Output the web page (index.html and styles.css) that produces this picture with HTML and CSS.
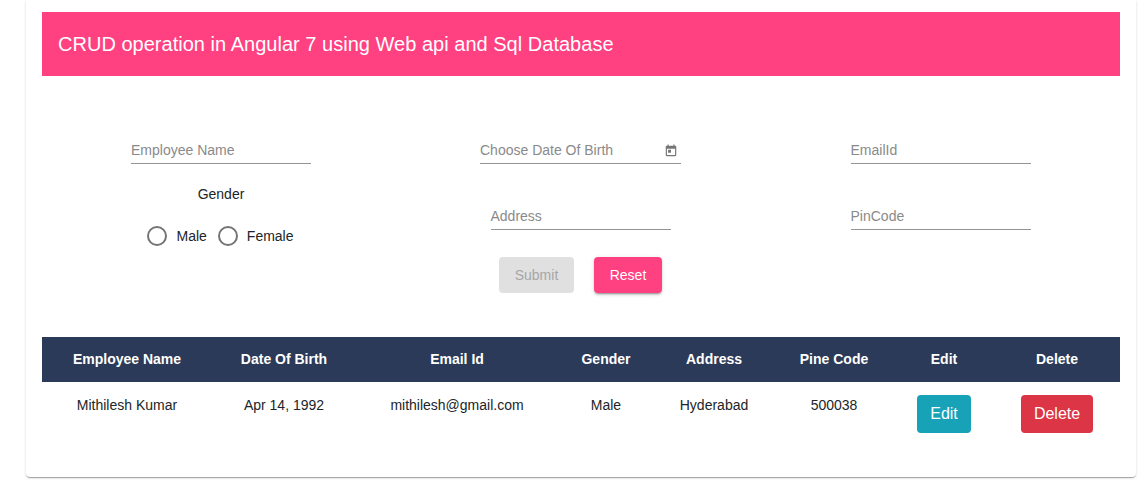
FILE: index.html
```html
<!DOCTYPE html>
<html lang="en">
<head>
<meta charset="utf-8">
<title>CRUD operation</title>
<link rel="stylesheet" href="styles.css">
</head>
<body>
<main class="card">
  <header class="banner">CRUD operation in Angular 7 using Web api and Sql Database</header>
  <form class="form">
    <div class="col">
      <label class="field"><span class="ph">Employee Name</span></label>
      <div class="gender">Gender</div>
      <div class="radios">
        <span class="radio"></span><span class="radio-label">Male</span>
        <span class="radio"></span><span class="radio-label">Female</span>
      </div>
    </div>
    <div class="col">
      <label class="field field-date"><span class="ph">Choose Date Of Birth</span>
        <svg class="cal" width="14" height="14" viewBox="0 0 24 24"><path fill="#757575" d="M19 3h-1V1h-2v2H8V1H6v2H5c-1.100 0-2 .9-2 2v14c0 1.100.9 2 2 2h14c1.100 0 2-.9 2-2V5c0-1.100-.9-2-2-2zm0 16H5V8h14v11zM7 10h5v5H7z"/></svg>
      </label>
      <label class="field field-next"><span class="ph">Address</span></label>
      <div class="actions">
        <button type="button" class="btn btn-off">Submit</button>
        <button type="button" class="btn btn-reset">Reset</button>
      </div>
    </div>
    <div class="col">
      <label class="field"><span class="ph">EmailId</span></label>
      <label class="field field-next"><span class="ph">PinCode</span></label>
    </div>
  </form>
  <table class="table">
    <colgroup>
      <col class="c1"><col class="c2"><col class="c3"><col class="c4"><col class="c5"><col class="c6"><col class="c7"><col class="c8">
    </colgroup>
    <thead>
      <tr><th>Employee Name</th><th>Date Of Birth</th><th>Email Id</th><th>Gender</th><th>Address</th><th>Pine Code</th><th>Edit</th><th>Delete</th></tr>
    </thead>
    <tbody>
      <tr>
        <td>Mithilesh Kumar</td><td>Apr 14, 1992</td><td>mithilesh@gmail.com</td><td>Male</td><td>Hyderabad</td><td>500038</td>
        <td><button type="button" class="tbtn tbtn-edit">Edit</button></td>
        <td><button type="button" class="tbtn tbtn-del">Delete</button></td>
      </tr>
    </tbody>
  </table>
</main>
</body>
</html>
```
FILE: styles.css
```css
* { box-sizing: border-box; }
html, body { margin: 0; padding: 0; background: #fff; overflow: hidden; height: 480px; }
body { font-family: "Liberation Sans", Arial, sans-serif; font-size: 14px; color: #212529; padding-left: 26px; }
.card {
  width: 1110px;
  height: 477px;
  padding: 12px 16px 0;
  background: #fff;
  border-radius: 0 0 4px 4px;
  box-shadow: 0 2px 1px -1px rgba(0,0,0,.2), 0 1px 1px 0 rgba(0,0,0,.14), 0 1px 3px 0 rgba(0,0,0,.12);
}
.banner {
  height: 64px;
  padding: 0 16px;
  display: flex;
  align-items: center;
  background: #ff4081;
  color: #fff;
  font-size: 20px;
  letter-spacing: .02px;
}
.form {
  display: grid;
  grid-template-columns: 358px 361px 359px;
  height: 261px;
  padding-top: 61px;
}
.col { display: flex; flex-direction: column; align-items: center; }
.field {
  width: 180px;
  height: 27px;
  display: flex;
  align-items: flex-start;
  justify-content: space-between;
  padding-top: 5px;
  border-bottom: 1px solid #949494;
  line-height: 17px;
}
.field-date { width: 201px; padding-right: 3px; }
.field-next { margin-top: 39px; }
.ph { color: #8a8a8a; }
.cal { margin-top: 2px; }
.gender { margin-top: 22px; height: 17px; line-height: 17px; }
.radios { margin-top: 23px; margin-right: 1px; display: flex; align-items: center; height: 20px; }
.radio { width: 20px; height: 20px; border: 2px solid #757575; border-radius: 50%; }
.radio-label { margin-left: 9px; margin-right: 11px; line-height: 20px; }
.radio-label:last-child { margin-right: 0; }
.actions { margin-top: 27px; display: flex; gap: 20px; }
.btn {
  height: 36px;
  border: 0;
  border-radius: 4px;
  font: 14px "Liberation Sans", Arial, sans-serif;
  padding: 0;
}
.btn-off { width: 75px; background: #e0e0e0; color: #a6a6a6; }
.btn-reset {
  width: 68px;
  background: #ff4081;
  color: #fff;
  box-shadow: 0 3px 1px -2px rgba(0,0,0,.2), 0 2px 2px 0 rgba(0,0,0,.14), 0 1px 5px 0 rgba(0,0,0,.12);
}
.table { width: 1078px; border-collapse: collapse; table-layout: fixed; }
.c1 { width: 170px; } .c2 { width: 144px; } .c3 { width: 202px; } .c4 { width: 96px; }
.c5 { width: 120px; } .c6 { width: 120px; } .c7 { width: 100px; } .c8 { width: 126px; }
.table th {
  height: 45px;
  padding: 0 0 2px;
  background: #2b3a58;
  color: #fff;
  font-size: 14px;
  font-weight: 700;
  text-align: center;
  vertical-align: middle;
}
.table td {
  padding: 13px 0 0;
  height: 70px;
  text-align: center;
  vertical-align: top;
  line-height: 20px;
}
.tbtn {
  height: 38px;
  border: 1px solid transparent;
  border-radius: 4px;
  color: #fff;
  font: 16px "Liberation Sans", Arial, sans-serif;
  padding: 0 12px;
  display: block;
  margin: 0 auto;
}
.tbtn-edit { background: #17a2b8; }
.tbtn-del { background: #dc3545; }
```
